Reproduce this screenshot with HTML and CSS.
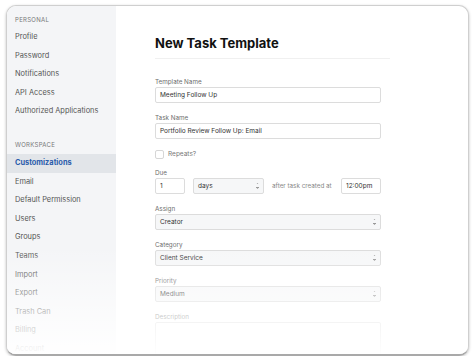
FILE: index.html
```html
<!DOCTYPE html>
<html lang="en">
<head>
  <meta charset="UTF-8">
  <meta name="viewport" content="width=device-width, initial-scale=1">
  <title>New Task Template</title>
  <link rel="stylesheet" href="styles.css">
</head>
<body>

  <div class="window">
    <aside class="sidebar">
      <div class="side-title">Personal</div>
      <a class="side-link">Profile</a>
      <a class="side-link">Password</a>
      <a class="side-link">Notifications</a>
      <a class="side-link">API Access</a>
      <a class="side-link">Authorized Applications</a>

      <div class="side-title workspace">Workspace</div>
      <a class="side-link active">Customizations</a>
      <a class="side-link">Email</a>
      <a class="side-link">Default Permission</a>
      <a class="side-link">Users</a>
      <a class="side-link">Groups</a>
      <a class="side-link">Teams</a>
      <a class="side-link">Import</a>
      <a class="side-link">Export</a>
      <a class="side-link">Trash Can</a>
      <a class="side-link">Billing</a>
      <a class="side-link">Account</a>
    </aside>

    <main class="content">
      <h1>New Task Template</h1>

      <div class="field">
        <label>Template Name</label>
        <div class="input">Meeting Follow Up</div>
      </div>

      <div class="field">
        <label>Task Name</label>
        <div class="input">Portfolio Review Follow Up: Email</div>
      </div>

      <div class="check-row">
        <span class="checkbox"></span>
        <span>Repeats?</span>
      </div>

      <div class="field">
        <label>Due</label>
        <div class="due-row">
          <div class="input num">1</div>
          <div class="input select days">days</div>
          <span class="after">after task created at</span>
          <div class="input time">12:00pm</div>
        </div>
      </div>

      <div class="field">
        <label>Assign</label>
        <div class="input select">Creator</div>
      </div>

      <div class="field">
        <label>Category</label>
        <div class="input select">Client Service</div>
      </div>

      <div class="field">
        <label>Priority</label>
        <div class="input select">Medium</div>
      </div>

      <div class="field">
        <label>Description</label>
        <div class="input textarea"></div>
      </div>
    </main>

    <div class="fade"></div>
  </div>

</body>
</html>
```

FILE: styles.css
```css
* {
  box-sizing: border-box;
}
body {
  font-family: Inter, 'Noto Sans', sans-serif;
  background: #ffffff;
  margin: 0;
  padding: 5px 5px 0 6px;
  color: #333;
}
.window {
  position: relative;
  display: flex;
  width: 463px;
  height: 351px;
  border: 1px solid #cfcfcf;
  border-bottom: 2px solid #a9a9a9;
  border-radius: 10px;
  overflow: hidden;
  background: white;
  box-shadow: 0 1px 3px rgba(0, 0, 0, 0.25);
}

/* sidebar */
.sidebar {
  width: 109px;
  flex-shrink: 0;
  background: #f4f5f7;
  padding-top: 10px;
  display: flex;
  flex-direction: column;
}
.side-title {
  font-size: 6px;
  letter-spacing: 0.3px;
  text-transform: uppercase;
  color: #777;
  padding-left: 8px;
  line-height: 8px;
  margin-bottom: 4px;
}
.side-title.workspace {
  margin-top: 20px;
  margin-bottom: 5px;
}
.side-link {
  display: block;
  font-size: 7.4px;
  color: #555;
  padding-left: 8px;
  line-height: 18.6px;
  white-space: nowrap;
}
.side-link.active {
  background: #e2e5e9;
  color: #2b5cab;
  font-weight: 700;
}

/* main */
.content {
  flex: 1;
  padding: 27px 0 0 39px;
}
h1 {
  margin: 0;
  width: 235px;
  font-size: 13px;
  font-weight: 700;
  color: #111;
  line-height: 20px;
  padding-bottom: 5px;
  border-bottom: 1px solid #f0f0f0;
  margin-bottom: 18px;
}
.field {
  width: 226px;
  margin-bottom: 10px;
}
.field label {
  display: block;
  font-size: 6.3px;
  color: #6d6d6d;
  line-height: 10px;
}
.input {
  height: 16px;
  border: 1px solid #dcdcdc;
  border-radius: 2px;
  background: white;
  font-size: 6.5px;
  color: #333;
  line-height: 14px;
  padding-left: 4px;
  white-space: nowrap;
}
.select {
  position: relative;
  background: #f6f7f8;
}
.select::after {
  content: '';
  position: absolute;
  right: 4px;
  top: 4px;
  width: 3px;
  height: 6px;
  background:
    linear-gradient(to bottom, #999 0 1.5px, transparent 1.5px 4.5px, #999 4.5px);
  clip-path: polygon(50% 0, 100% 30%, 100% 70%, 50% 100%, 0 70%, 0 30%);
}
.check-row {
  display: flex;
  align-items: center;
  gap: 4px;
  font-size: 6.5px;
  color: #777;
  line-height: 10px;
  margin: 0 0 9px 0;
}
.checkbox {
  width: 9px;
  height: 9px;
  border: 1px solid #d6d6d6;
  border-radius: 2px;
  background: white;
}
.due-row {
  display: flex;
  align-items: center;
}
.due-row .num {
  width: 30px;
  margin-right: 8px;
}
.due-row .days {
  width: 71px;
  margin-right: 8px;
}
.after {
  flex: 1;
  font-size: 6.3px;
  color: #888;
  white-space: nowrap;
}
.due-row .time {
  width: 40px;
  padding-left: 4px;
}
.textarea {
  height: 40px;
}

/* bottom fade */
.fade {
  position: absolute;
  left: 0;
  right: 0;
  top: 240px;
  bottom: 0;
  background: linear-gradient(to bottom, rgba(255, 255, 255, 0), rgba(255, 255, 255, 0.55) 55%, rgba(255, 255, 255, 0.97));
  pointer-events: none;
}
```
